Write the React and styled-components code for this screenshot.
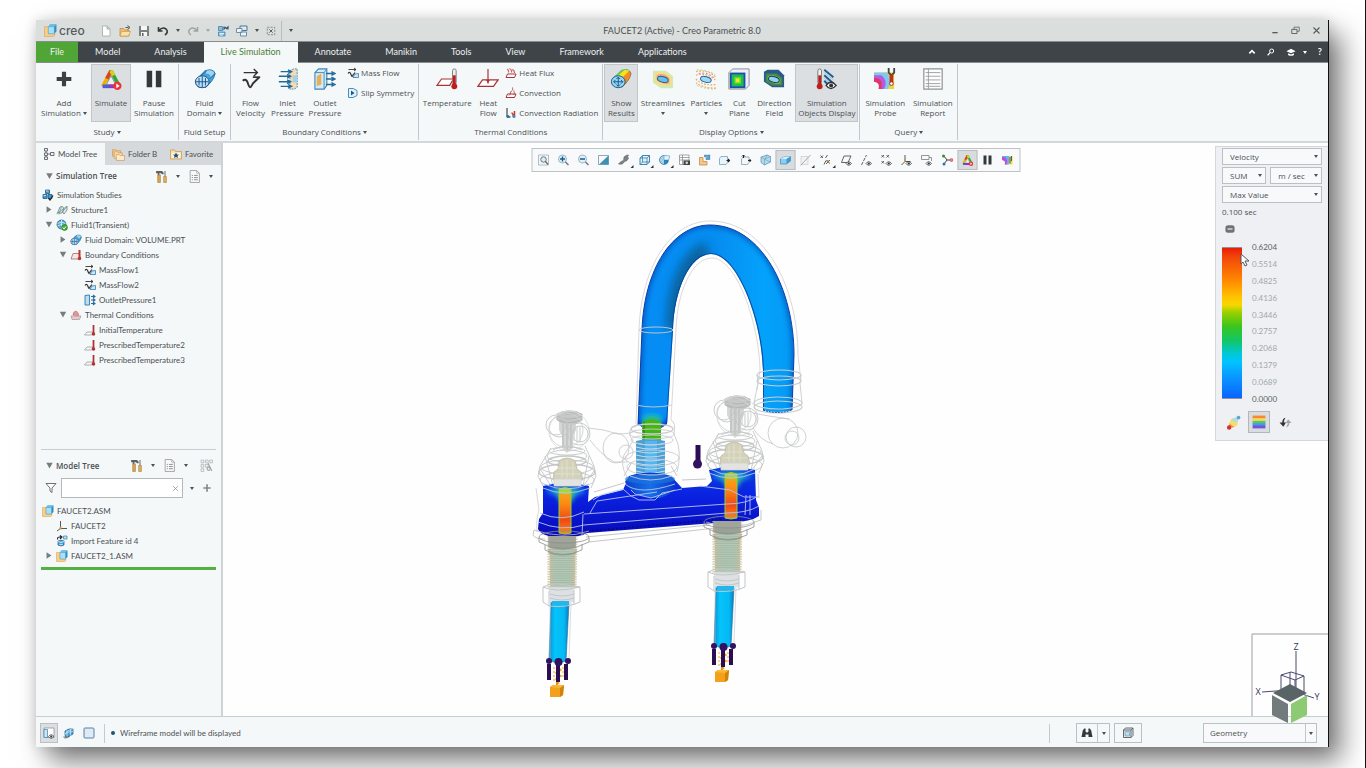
import React from "react";
import styled, { createGlobalStyle, css } from "styled-components";

const GlobalStyle = createGlobalStyle`
  * {
    box-sizing: border-box;
  }
  body {
    margin: 0;
    background: #fff;
    color: #4b5053;
    font-family: "Open Sans", "Noto Sans", sans-serif;
    font-size: 8px;
    line-height: 10px;
  }
  button, input, select {
    margin: 0;
    padding: 0;
    border: 0;
    background: none;
    color: inherit;
    font: inherit;
  }
`;

const narrowFont = css`
  font-family: Lato, "Open Sans", sans-serif;
`;

/* ---------- icons, all drawn on a 24 unit grid ---------- */

const domainShape = (front, side) => (
  <>
    <path d="M2 13 12 3q9-3 11 3-1 7-10 15H5q-4-3-3-8z" fill={side} stroke="#1b6fa8" />
    <path d="M13 3q8-2 9 3l-4 4q0-4-5-4z" fill="#9fd3ee" />
    <path d="m7 9 7-6M17 12l6-6" stroke="#1b6fa8" fill="none" />
    <ellipse cx="9" cy="15" rx="7.5" ry="6.5" fill={front} stroke="#1a4f86" />
    <path d="M9 9v12M2 15h14M5.5 11v8M12.5 11v8" stroke="#1a4f86" fill="none" />
  </>
);

const eye = (
  <>
    <path d="M11 19q5-7 11 0-6 7-11 0z" fill="#fff" stroke="#333" strokeWidth="1.5" />
    <circle cx="16.5" cy="19" r="2.2" fill="#333" />
  </>
);

const thermo = (x) => (
  <>
    <rect x={x} y="1" width="4" height="17" rx="2" fill="#eee" stroke="#777" />
    <path d={`M${x + 2} 8v12`} stroke="#c01c1c" strokeWidth="3" />
    <circle cx={x + 2} cy="20" r="3.2" fill="#c01c1c" />
  </>
);

const plate = <path d="M6 12h13l-4 7H1z" fill="#fff" stroke="#a33" strokeWidth="1.3" />;

const triangle = (
  <>
    <path d="M12 3 3 20" stroke="#e9b400" strokeWidth="4" />
    <path d="M12 3 7.5 11.5" stroke="#e0401c" strokeWidth="4" />
    <path d="m12 3 8 15" stroke="#32a83c" strokeWidth="4" />
    <path d="M12 3l3 5" stroke="#d8cf20" strokeWidth="4" />
    <path d="M3 20h15" stroke="#a42bd0" strokeWidth="4" />
    <path d="M3 20h7" stroke="#2f6ce0" strokeWidth="3" />
    <path d="M12 8.5 7 18h10z" fill="#eee" stroke="#555" strokeWidth=".6" />
    <circle cx="19" cy="19.5" r="4.5" fill="#e33" />
    <path d="m17.8 17 3.7 2.5-3.7 2.5z" fill="#fff" />
  </>
);

const massFlow = (
  <>
    <path d="M3 5h15m-4-3 4 3-4 3" stroke="#333" strokeWidth="1.8" fill="none" />
    <path d="M2 13q4-5 6 2t4 1l4-5" stroke="#333" strokeWidth="2.4" fill="none" />
    <path d="M12 21l4-7 7-1v8z" fill="#cfe6f4" stroke="#2878a8" strokeWidth="1.5" />
  </>
);

const cubeLogo = (
  <>
    <path d="M1 5h7v13h12v3l-3 2H1z" fill="#f8cf8c" stroke="#d99a3d" />
    <path d="M8 5h11v13H8z" fill="#a9e0f6" stroke="#3aa2d0" />
    <path d="m8 5 3-4h12l-4 4zM19 5l4-4v13l-4 4z" fill="#2d8fc4" />
    <path d="m8 5 3-4h12l-4 4z" fill="#6cc0e6" />
  </>
);

const listPage = (
  <>
    <path d="M4 1h12l5 5v17H4z" fill="#fafafa" stroke="#8b8f91" strokeWidth="1.4" />
    <path d="M16 1v5h5" fill="none" stroke="#8b8f91" />
    <path d="M7 10h2M7 14h2M7 18h2M11 10h7M11 14h7M11 18h7" stroke="#73787a" strokeWidth="1.5" />
  </>
);

const shapes = {
  plus: <path d="M12 4v16M4 12h16" stroke="#3c4043" strokeWidth="4.5" />,
  plusSmall: <path d="M12 1v22M1 12h22" stroke="#85898b" strokeWidth="5" />,
  simulate: triangle,
  pause: <path d="M4 3h6v18H4zM14 3h6v18h-6z" fill="#34383a" />,
  domain: domainShape("#b9e0f5", "#4aa3d4"),
  velocity: (
    <>
      <path d="M4 5h15m-4-4 4 4-4 4" stroke="#333" strokeWidth="1.5" fill="none" />
      <path d="M3 14q3-3 5 1 2 6 3 6 1 0 3-4l7-7" stroke="#333" strokeWidth="2.2" fill="none" />
      <path d="M14 10h8" stroke="#333" strokeWidth="1.8" />
    </>
  ),
  inlet: (
    <>
      <path d="m14 3 4-2h4v20l-3 2h-5z" fill="#f3dcb0" stroke="#3c87b6" strokeDasharray="2 1" />
      <path d="M17 8h5v8h-5z" fill="#a8cfe6" />
      <path d="M4 4h11M2 9h12M2 15h12M4 20h11M12 2l4 2-4 2M11 7l4 2-4 2M11 13l4 2-4 2M12 18l4 2-4 2" stroke="#236a9a" fill="none" strokeWidth="1.4" />
    </>
  ),
  outlet: (
    <>
      <path d="m1 5 4-4h9v18l-3 4H1z" fill="#d7ebf6" stroke="#3c87b6" strokeWidth="1.2" />
      <path d="M11 5v18M1 5h10l3-4" fill="none" stroke="#3c87b6" />
      <path d="m3 9 5-3v12l-5 2z" fill="#e3b05e" />
      <path d="M13 6h8M13 12h9M13 18h8M19 4l4 2-4 2M19 10l4 2-4 2M19 16l4 2-4 2" stroke="#236a9a" fill="none" strokeWidth="1.4" />
    </>
  ),
  massFlow,
  slip: (
    <>
      <path d="M3 3q10-2 17 4v10q-7 6-17 4z" fill="#e3f1fa" stroke="#3f92c2" strokeWidth="2" />
      <path d="M8 7v10l7-5z" fill="#23567a" />
    </>
  ),
  temperature: <>{plate}{thermo(18)}</>,
  heatFlow: (
    <>
      <path d="M6 13h17l-5 7H1z" fill="#fff" stroke="#a33" strokeWidth="1.3" />
      <path d="M12 1v16" stroke="#a33" strokeWidth="1.3" />
      <path d="M10 13h4l-2 4z" fill="#a33" />
    </>
  ),
  heatFlux: (
    <>
      <path d="M5 14h17l-3 7H2z" fill="#fff" stroke="#a33" strokeWidth="2" />
      <path d="M4 4q4 2 3 7M9 3q5 2 4 8m1-6q5 1 5 7" stroke="#c66" strokeWidth="2.4" fill="none" />
    </>
  ),
  convection: (
    <>
      <path d="M5 14h17l-3 7H2z" fill="#fff" stroke="#a33" strokeWidth="2" />
      <path d="M8 17c5-4 1-6 5-9s2-4 2-7m2 15c4-4 0-6 1-9" stroke="#a44" strokeWidth="1.8" fill="none" />
    </>
  ),
  radiation: (
    <>
      <path d="M4 2v18h7" stroke="#222" strokeWidth="2" fill="none" />
      <circle cx="6" cy="19" r="3" fill="#2c6fa2" />
      <path d="M13 12q3 0 4 8M19 8v10" stroke="#c33" strokeWidth="3" fill="none" />
      <circle cx="18" cy="19" r="3" fill="#378fbd" />
    </>
  ),
  results: (
    <>
      <path d="M2 13 12 3q9-3 11 3-1 7-10 15z" fill="#f58a1f" stroke="#555" strokeWidth=".6" />
      <path d="M3 11 13 2q7-2 8 1L9 14z" fill="#5ecb5a" />
      <path d="M6 11 16 2l5 1L10 14z" fill="#f8e028" />
      <ellipse cx="9" cy="15" rx="7.5" ry="6.5" fill="#8fd6f3" stroke="#1a4f86" />
      <path d="M9 10v10M4 15h10M7 12l2-2 2 2M7 18l2 2 2-2M6 13l-2 2 2 2M12 13l2 2-2 2" stroke="#1a4f86" fill="none" />
    </>
  ),
  streamlines: (
    <>
      <path d="M1 3h14l8 6v13H10l-9-6z" fill="#cdebb4" />
      <path d="M3 5h12l6 5v9H10l-7-4z" fill="#fbdc85" />
      <path d="M5 8q8-4 14 3v6q-6 2-14-4z" fill="#f7a37c" />
      <ellipse cx="12" cy="12.5" rx="6" ry="3" transform="rotate(15 12 12)" fill="#5fc1ee" stroke="#1f5e93" />
    </>
  ),
  particles: (
    <>
      <path d="M1 4q12-3 22 6M1 8q12-4 22 6M1 12q8 8 22 6M1 16q8 6 22 6" stroke="#f0a060" strokeWidth="1.2" strokeDasharray="2 1.5" fill="none" />
      <path d="M2 2q10 0 20 5M2 19q9 4 20 4" stroke="#9bd070" strokeDasharray="2 2" fill="none" />
      <path d="M4 6q10-2 17 5" stroke="#dd6070" strokeDasharray="2 2" fill="none" />
      <ellipse cx="12" cy="12.5" rx="6" ry="3" transform="rotate(15 12 12)" fill="#9bd8f4" stroke="#1f5e93" />
    </>
  ),
  cut: (
    <>
      <path d="m1 5 4-4h18v18l-4 4H1z" fill="#eef" stroke="#888" />
      <path d="M2 5h17v17H2z" fill="#1b4fa8" />
      <path d="M4 7h13v13H4z" fill="#1fbf4b" />
      <path d="M7 10h7v7H7z" fill="#6fe03a" />
      <path d="M8.5 11.5h4v4h-4z" fill="#f4e61e" />
    </>
  ),
  direction: (
    <>
      <path d="M1 4 5 2h12l6 6v13H10l-9-6z" fill="#2a5a8c" />
      <path d="M3 6h12l6 5v8H10l-7-4z" fill="#3f8a4b" />
      <path d="M5 9q7-4 14 3v5q-6 2-14-4z" fill="#86a94b" />
      <ellipse cx="12" cy="12.5" rx="6" ry="3" transform="rotate(15 12 12)" fill="#8fd3f4" stroke="#183a66" />
    </>
  ),
  objects: (
    <>
      {thermo(2)}
      <path d="m9 2 10 8M9 8l10 9M9 14l5 5" stroke="#1d5f92" strokeWidth="2.2" />
      <path d="m9 5 10 8M9 11l9 8" stroke="#8fc3e4" />
      {eye}
    </>
  ),
  probe: (
    <>
      <path d="M0 5h22v18H5l3-7q-1-4-8-4z" fill="#e8d83a" />
      <path d="M0 5h14q7 8 1 18H6q6-9-6-12z" fill="#7fc9ef" />
      <path d="M0 8h8q8 6 3 15H7q5-9-7-11z" fill="#b45be0" />
      <path d="M0 11q11 0 8 12H5q2-7-5-8z" fill="#e2336b" />
      <path d="M16 0v5l3 3 3-3V0" stroke="#444" strokeWidth="2" fill="none" />
      <path d="M19 7v10" stroke="#c0301c" strokeWidth="4" />
      <circle cx="19" cy="17" r="2" fill="#fff" stroke="#a22" />
    </>
  ),
  report: (
    <>
      <path d="M2 1h20v22H2z" fill="#fdfdfd" stroke="#8e9294" strokeWidth="1.3" />
      <path d="M7 1v22M4 5h16M4 9h16M4 13h16M4 17h16M4 20h16" stroke="#9a9ea0" />
    </>
  ),
  newFile: <path d="M5 2h9l6 6v14H5zM14 2v6h6" fill="#fff" stroke="#9da1a3" strokeWidth="1.5" />,
  open: (
    <>
      <path d="M2 7h7l2 3h9v12H2z" fill="#f3c070" stroke="#b98434" strokeWidth="1.4" />
      <path d="m5 13-3 9h17l4-9z" fill="#fbe0a8" stroke="#b98434" />
      <path d="M13 5h6M17 1l5 4-5 4" stroke="#555" strokeWidth="2" fill="none" />
    </>
  ),
  save: (
    <>
      <path d="M2 2h20v20H2z" fill="#7b8083" />
      <path d="M6 2h12v8H6zM6 14h12v8H6z" fill="#f5f6f6" />
      <path d="M8 16h3v6H8z" fill="#5a5f62" />
    </>
  ),
  undo: <path d="M3 4v8h8M4 11q7-8 14-3 6 6-2 12" stroke="#34383a" strokeWidth="3.2" fill="none" />,
  redo: <path d="M21 4v8h-8M20 11q-7-8-14-3-6 6 2 12" stroke="#9da2a4" strokeWidth="3" fill="none" />,
  regen: (
    <>
      <path d="M3 3h8v8H3zM3 14h13v8H3z" fill="#82bfe2" stroke="#3f7fa8" strokeWidth="1.5" />
      <path d="M14 3v5l4-4m4 5V4l-4 4" stroke="#2b5c7c" strokeWidth="2.4" fill="none" />
      <path d="M5 17h9M5 20h7" stroke="#fff" strokeWidth="1.5" />
    </>
  ),
  windows: (
    <>
      <path d="M8 2h14v9H8z" fill="#dce9f1" stroke="#4d7896" strokeWidth="2" />
      <path d="M1 7h11v8H1zM9 14h12v8H9z" fill="#eef3f6" stroke="#6b8fa8" strokeWidth="2" />
    </>
  ),
  closeWin: (
    <>
      <path d="M3 3h18v18H3z" fill="none" stroke="#777c7e" strokeWidth="2" strokeDasharray="5 3" />
      <path d="m8 8 8 8m0-8-8 8" stroke="#5c6163" strokeWidth="2.4" />
    </>
  ),
  minimize: <path d="M4 17h16" stroke="#565b5d" strokeWidth="4" />,
  restore: (
    <>
      <path d="M8 3h14v11H8z" fill="none" stroke="#565b5d" strokeWidth="2" />
      <path d="M2 9h14v11H2z" fill="#dadedd" stroke="#565b5d" strokeWidth="2.4" />
    </>
  ),
  close: <path d="m4 4 16 16m0-16L4 20" stroke="#565b5d" strokeWidth="3" />,
  clear: <path d="m4 4 16 16m0-16L4 20" stroke="#8a8e90" strokeWidth="2.5" />,
  chevronUp: <path d="m4 16 8-8 8 8" stroke="#fff" strokeWidth="5" fill="none" />,
  search: (
    <>
      <circle cx="14" cy="9" r="6" stroke="#fff" strokeWidth="3" fill="none" />
      <path d="m9 14-7 8" stroke="#fff" strokeWidth="4" />
    </>
  ),
  learn: (
    <>
      <path d="M1 10 12 4l11 6-11 5z" fill="#fff" />
      <path d="M5 15v4q7 4 14 0v-4l-7 3z" fill="#fff" />
    </>
  ),
  treeTab: (
    <>
      <path d="M6 5v15M8 12h7" stroke="#5c6163" strokeWidth="1.8" />
      <path d="M3 1h6v5H3zM3 10h6v5H3zM3 18h6v5H3zM15 9h7v6h-7z" fill="#f2f2f2" stroke="#5c6163" strokeWidth="1.8" />
    </>
  ),
  folders: (
    <>
      <path d="M1 3h6l2 2h7v10H1z" fill="#f4c887" stroke="#c08a46" />
      <path d="M4 7h6l2 2h7v10H4z" fill="#f9dca9" stroke="#c08a46" />
      <path d="M8 12h5l2 2h8v9H8z" fill="#fdebc9" stroke="#c08a46" />
    </>
  ),
  favorite: (
    <>
      <path d="M1 4h8l2 3h12v15H1z" fill="#f8dda6" stroke="#c79a4f" strokeWidth="1.5" />
      <path d="M3 9h18v11H3z" fill="#fdf3dc" />
      <path d="m12 9 2 4 4 .5-3 2.500 1 4-4-2-4 2 1-4-3-2.500L10 13z" fill="#19527c" />
    </>
  ),
  tools: (
    <>
      <path d="M2 2h11l3 3v3h-3l-2-2H8v3H5V6H2z" fill="#5d6163" />
      <path d="M5 9h5v14H5z" fill="#dba650" stroke="#9a7230" />
      <path d="M17 2h3v10h-3z" fill="#9aa0a2" />
      <path d="M16 12h5v11h-5z" fill="#e1b25f" stroke="#9a7230" />
    </>
  ),
  list: listPage,
  studies: (
    <>
      <path d="M7 2h8v7H7zM2 11h8v8H2zM12 11h8v8h-8z" fill="#3f97cf" stroke="#1c567f" strokeWidth="1.5" />
      <path d="M8 3h5v2H8zM3 12h5v2H3z" fill="#b9def3" />
      <path d="m13 18 3 4 6-9" stroke="#222" strokeWidth="2.5" fill="none" />
    </>
  ),
  structure: (
    <>
      <path d="M3 18 8 6q8-3 7 4l-3 8zM13 16 22 4v8l-6 8z" fill="#e7ecee" stroke="#72797c" strokeWidth="1.6" />
      <path d="m1 20 20-15M6 21 11 5" stroke="#4f9a86" strokeWidth="1.4" />
    </>
  ),
  fluid: (
    <>
      <circle cx="11" cy="11" r="9" fill="#5aa9cf" stroke="#246287" strokeWidth="1.5" />
      <path d="M3 9q8-6 16 0M3 14q8-6 16 0M11 2v18" stroke="#e3f3fa" strokeWidth="1.5" fill="none" />
      <circle cx="17" cy="17" r="6" fill="#3faa3a" stroke="#1d6d1a" />
      <path d="m14 17 2 3 4-5" stroke="#fff" strokeWidth="2" fill="none" />
    </>
  ),
  boundary: (
    <>
      <path d="M6 9h12l3 11H2z" fill="#f5e6e6" stroke="#a66" strokeWidth="1.6" />
      <path d="M19 2v16" stroke="#b33" strokeWidth="4" />
      <circle cx="19" cy="19" r="3.5" fill="#b33" />
    </>
  ),
  outletSmall: (
    <>
      <path d="m2 3 9-1v20H2z" fill="#bcdcf0" stroke="#2f7aac" strokeWidth="1.8" />
      <path d="M14 5h8M14 12h8M14 19h8M18 2l4 3-4 3M18 9l4 3-4 3M18 16l4 3-4 3" stroke="#2b6ea0" strokeWidth="2.2" fill="none" />
    </>
  ),
  thermal: (
    <>
      <path d="M2 14h20l-3 7H4z" fill="#e6caca" stroke="#a99" strokeWidth="1.5" />
      <path d="M6 12q0-7 6-8 6 3 5 9z" fill="#e49a9a" stroke="#b55" />
    </>
  ),
  tempSmall: (
    <>
      <path d="M6 16h12l-3 6H1z" fill="#f6f6f6" stroke="#999" strokeWidth="1.5" />
      <path d="M19 2v17" stroke="#b23030" strokeWidth="3.5" />
      <circle cx="19" cy="20" r="3.5" fill="#b23030" />
    </>
  ),
  filter: <path d="M2 3h20l-8 9v9l-4-3v-6z" fill="#fff" stroke="#6c7173" strokeWidth="2" />,
  asm: cubeLogo,
  csys: (
    <>
      <path d="M9 2v15h13M9 17l-7 5" stroke="#54595b" strokeWidth="2" fill="none" />
      <path d="M8 13h3v6H6z" fill="#c99b4a" />
    </>
  ),
  importFeature: (
    <>
      <path d="M3 9q-1-6 7-5m-2-3 4 3-4 4" stroke="#222" strokeWidth="2.2" fill="none" />
      <path d="M15 2h7v6h-7z" fill="#b9dff4" stroke="#3c87b6" strokeWidth="1.5" />
      <path d="M4 12q6-3 12 0v8q-6 4-12 0z" fill="#4ba3d6" stroke="#26648c" strokeWidth="1.5" />
      <path d="M4 13q6 4 12 0M7 19q3 1 6 0" stroke="#fff" strokeWidth="1.5" fill="none" />
    </>
  ),
  hiddenTree: (
    <>
      <path d="M2 2h5v5H2zM10 2h5v5h-5zM2 10h5v5H2zM2 18h5v5H2zM18 2h5v5h-5zM10 10h5v5h-5z" fill="none" stroke="#b1b5b7" strokeWidth="1.5" />
      <path d="m15 8 7 14" stroke="#9ea3a5" strokeWidth="2" />
      <circle cx="16" cy="18" r="3" fill="none" stroke="#9ea3a5" strokeWidth="2" />
    </>
  ),
  refit: (
    <>
      <path d="M2 2h20v20H2z" fill="#f4f6f7" stroke="#a5aaac" strokeWidth="1.5" />
      <circle cx="12" cy="11" r="5.5" fill="#d9edf7" stroke="#5f7888" strokeWidth="2" />
      <path d="m16 15 5 6" stroke="#666" strokeWidth="2.5" />
    </>
  ),
  zoomIn: (
    <>
      <circle cx="10" cy="10" r="8" fill="#dff0f8" stroke="#8fb0c4" strokeWidth="1.8" />
      <path d="M10 5v10M5 10h10" stroke="#1d5c86" strokeWidth="2.8" />
      <path d="m16 16 6 6" stroke="#777" strokeWidth="3" />
    </>
  ),
  zoomOut: (
    <>
      <circle cx="10" cy="10" r="8" fill="#dff0f8" stroke="#8fb0c4" strokeWidth="1.8" />
      <path d="M5 10h10" stroke="#1d5c86" strokeWidth="2.8" />
      <path d="m16 16 6 6" stroke="#777" strokeWidth="3" />
    </>
  ),
  repaint: (
    <>
      <path d="M2 3h20v18H2z" fill="#f8fbfd" stroke="#7a8a94" strokeWidth="1.5" />
      <path d="M22 3v18H3z" fill="#3d8fb5" />
    </>
  ),
  render: <path d="M2 20q4-6 10-7l1-7q5-5 9-4-3 3 0 7-3 6-8 6-3 7-12 5z" fill="#7d8284" stroke="#54595b" />,
  box: (
    <>
      <path d="m3 8 5-5h14v13l-5 5H3z" fill="#e3f2fa" stroke="#2f7aac" strokeWidth="1.8" />
      <path d="M3 8h14v13M17 8l5-5M8 3v13h14M8 16l-5 5" fill="none" stroke="#2f7aac" strokeWidth="1.5" />
    </>
  ),
  section: (
    <>
      <circle cx="11" cy="12" r="9" fill="#a3d3ec" stroke="#39789f" strokeWidth="1.5" />
      <path d="M11 3v9h9l3-8z" fill="#e8f3f9" stroke="#7aa9c4" strokeWidth="1.5" />
      <path d="M11 12v9l8-3v-6z" fill="#2f82b4" />
    </>
  ),
  views: (
    <>
      <path d="M2 2h19v19H2zM2 7h19M2 12h19M8 2v19" fill="#fff" stroke="#85898b" strokeWidth="1.5" />
      <path d="M10 13h13v9H10z" fill="#444" />
      <circle cx="16.5" cy="17.5" r="2.5" fill="#ddd" />
    </>
  ),
  appearance: (
    <>
      <path d="M2 7h7v8h8v7H2z" fill="#f4c887" stroke="#c08a46" strokeWidth="1.5" />
      <path d="M12 2h4v4h-4zM18 2h5v9h-8V8h3z" fill="#5ba8d8" stroke="#2b72a2" />
    </>
  ),
  boxArrow: (
    <>
      <path d="m2 9 3-4h13v12l-3 4H2z" fill="#eaf5fb" stroke="#6a9dbb" strokeWidth="1.5" />
      <path d="M16 13h6m-3-3 3 3-3 3" stroke="#222" strokeWidth="2.2" fill="none" />
    </>
  ),
  boxSpin: (
    <>
      <path d="m4 10 3-4h12v11l-3 4H4z" fill="#f3f7f9" stroke="#8298a4" strokeWidth="1.5" />
      <path d="M8 8V2M5 5l3-3 3 3M17 13h6m-3-3 3 3-3 3" stroke="#222" strokeWidth="2" fill="none" />
    </>
  ),
  shaded: (
    <>
      <path d="m3 6 12-4 7 3v11L10 22 3 17z" fill="#b3d9ec" stroke="#5c95b7" strokeWidth="1.5" />
      <path d="m3 6 7 4v12M10 10l12-5M15 2l-4 9 11 5" stroke="#5c95b7" fill="none" />
    </>
  ),
  slab: (
    <>
      <path d="m2 10 9-5h11v9l-8 6H2z" fill="#8fcdf0" stroke="#3f92c2" strokeWidth="1.5" />
      <path d="m2 10 9-5h11l-8 5z" fill="#d6eefa" />
      <path d="m14 10 8-5v9l-8 6z" fill="#3f9ad0" />
    </>
  ),
  hatch: (
    <>
      <path d="M3 5h14v16H3z" fill="#f2f2f2" stroke="#ccc" strokeWidth="1.5" />
      <path d="M2 23 22 2" stroke="#aaa" strokeWidth="2" />
    </>
  ),
  datum: (
    <>
      <path d="m2 3 5 5m0-5L2 8M12 8l4-6M9 21l4-8M13 20l8-8M14 13l7 6" stroke="#4b4f51" strokeWidth="1.8" fill="none" />
      <path d="M14 12h4v4h-4z" fill="#b88a3c" />
    </>
  ),
  planeEye: (
    <>
      <path d="M7 4h14l-6 13H2z" fill="none" stroke="#555" strokeWidth="1.8" />
      {eye}
    </>
  ),
  axisEye: (
    <>
      <path d="M2 22 12 2" stroke="#555" strokeWidth="1.8" strokeDasharray="7 2" />
      {eye}
    </>
  ),
  pointEye: (
    <>
      <path d="m2 2 5 5m0-5L2 7m10-5 5 5m0-5-5 5M2 14l5 5m0-5-5 5" stroke="#555" strokeWidth="1.8" />
      {eye}
    </>
  ),
  csysEye: (
    <>
      <path d="M9 2v13h11M9 15l-7 7" stroke="#555" strokeWidth="2" fill="none" />
      <path d="M7 11h4v4H7z" fill="#c99b4a" />
      {eye}
    </>
  ),
  noteEye: (
    <>
      <path d="M2 3h15v8H2zM17 7h5v7" fill="none" stroke="#888" strokeWidth="1.8" />
      {eye}
    </>
  ),
  spin: (
    <>
      <path d="M11 12h9M11 12 5 4M11 12l-6 8" stroke="#444" strokeWidth="2" />
      <circle cx="4" cy="4" r="3" fill="#3c8a3c" />
      <circle cx="20" cy="12" r="3" fill="#e88" stroke="#b33" />
      <circle cx="5" cy="20" r="3" fill="#2c6fc0" />
    </>
  ),
  rainbow: (
    <>
      <path d="M1 4h21v17H8V10H1z" fill="#f2d93a" />
      <path d="M1 4h13q4 8 0 17H7q5-8-6-11z" fill="#5fb7ea" />
      <path d="M1 6h6q7 7 3 15H6q4-7-5-9z" fill="#c14ddb" />
      <path d="M17 6v13M20 4v10" stroke="#557" strokeWidth="2" />
    </>
  ),
  minusBadge: (
    <>
      <rect x="1" y="3" width="22" height="18" rx="6" fill="#6e7375" />
      <path d="M6 12h12" stroke="#fff" strokeWidth="2.5" />
    </>
  ),
  range: (
    <>
      <path d="M7 8q4-5 12-4 1 9-2 13-5 3-11 3-2-6 1-12z" fill="#f6dc6f" />
      <path d="M8 8q5-5 11-4 0 5-2 8-5-2-9-4z" fill="#a9dfe9" />
      <path d="M6 13q3 5 8 5l-3 2H6q-2-3 0-7z" fill="#f0934b" />
      <circle cx="5" cy="20" r="3.5" fill="#d8302a" />
      <circle cx="20" cy="4" r="3" fill="#5aa6d8" />
    </>
  ),
  bands: (
    <>
      <path d="M1 1h22v5H1z" fill="#f48a35" />
      <path d="M1 6h22v5H1z" fill="#f8dd4e" />
      <path d="M1 10h22v5H1z" fill="#59c468" />
      <path d="M1 14h22v5H1z" fill="#3f9ce8" />
      <path d="M1 18h22v5H1z" fill="#7453d6" />
    </>
  ),
  flip: (
    <>
      <path d="M12 3Q6 4 6 12H1l7 8 5-8H9q0-5 3-9z" fill="#333" />
      <path d="M13 21q6-1 6-8h4l-6-7-5 7h4q0 5-3 8z" fill="#a3a7a9" />
    </>
  ),
  navPane: (
    <>
      <path d="M2 2h20v19H2z" fill="#fff" stroke="#8a8e90" strokeWidth="1.5" />
      <path d="M2 5h7v16H2z" fill="#cfe5f2" stroke="#3c87b6" strokeWidth="1.5" />
      {eye}
    </>
  ),
  browser: (
    <>
      <path d="M4 8q8-6 16-4v10q-8 6-16 6z" fill="#4ba0d2" stroke="#236089" strokeWidth="1.5" />
      <path d="M1 20Q7 5 23 3M8 6v13M15 4v13M4 13q8-4 16-4" stroke="#cfe7f5" strokeWidth="1.5" fill="none" />
      <path d="M1 20q3 4 12-1" stroke="#444" strokeWidth="1.6" fill="none" />
    </>
  ),
  pane: <rect x="2" y="2" width="20" height="20" rx="2" fill="#dfeaf5" stroke="#5682a8" strokeWidth="2" />,
  find: (
    <>
      <path d="M4 5h5v4l2 2h2l2-2V5h5l3 15h-8v-5H9v5H1z" fill="#33383a" />
      <path d="M6 3h3v3H6zM15 3h3v3h-3z" fill="#33383a" />
    </>
  ),
  select3d: (
    <>
      <path d="m3 6 4-4h15v15l-4 4H3z" fill="#e7edf0" stroke="#555b5e" strokeWidth="1.8" />
      <path d="M3 6h15v15M18 6l4-4" fill="none" stroke="#555b5e" strokeWidth="1.8" />
      <path d="M6 9h9v9H6z" fill="#b8dcef" stroke="#4d87a8" />
    </>
  ),
};

const Svg = styled.svg`
  display: block;
  flex: none;
  width: ${(p) => p.$size}px;
  height: ${(p) => p.$size}px;
`;

const Icon = ({ name, size = 12 }) => (
  <Svg $size={size} viewBox="0 0 24 24" aria-hidden="true">
    {shapes[name]}
  </Svg>
);

const Caret = styled.span`
  display: inline-block;
  flex: none;
  border: 2px solid transparent;
  border-top: 3px solid ${(p) => p.$color || "#4b5053"};
  border-bottom: 0;
  vertical-align: middle;
`;

const Twisty = styled.span`
  flex: none;
  width: 7px;
  height: 8px;
  background: #777c7e;
  clip-path: ${(p) =>
    p.$state === "open"
      ? "polygon(4% 15%, 96% 15%, 50% 88%)"
      : "polygon(15% 8%, 85% 50%, 15% 92%)"};
`;

/* ---------- frame ---------- */

const Page = styled.div`
  display: flex;
  min-height: 100vh;
  padding: 20px 36px 21px;
  border-right: 1px solid #111;
  overflow: hidden;
`;

const Window = styled.main`
  flex: 1;
  min-width: 0;
  display: flex;
  flex-direction: column;
  border-right: 1px solid #111;
  background: #f5f8f9;
  box-shadow: 12px 14px 26px rgba(0, 0, 0, 0.52), 0 0 12px rgba(0, 0, 0, 0.14);
`;

const TitleBar = styled.header`
  display: grid;
  grid-template-columns: 1fr auto 1fr;
  align-items: center;
  height: 21px;
  background: #dadedd;
`;

const QuickAccess = styled.div`
  display: flex;
  align-items: center;
  gap: 7px;
  padding-left: 8px;
`;

const Brand = styled.span`
  display: flex;
  align-items: center;
  gap: 2px;
  margin-right: 8px;
  color: #555b5e;
  font-family: Inter, sans-serif;
  font-size: 12px;
  font-weight: 500;
  line-height: 16px;
`;

const IconButton = styled.button`
  display: flex;
  align-items: center;
  justify-content: center;
  gap: 7px;
`;

const QuickLine = styled.span`
  width: 1px;
  height: 20px;
  margin-left: -2px;
  background: #b9bdbd;
`;

const Title = styled.h1`
  margin: 0;
  ${narrowFont}
  font-size: 9px;
  font-weight: 400;
`;

const WindowButtons = styled.div`
  display: flex;
  justify-content: flex-end;
  gap: 12px;
  padding-right: 7px;
`;

const TabBar = styled.nav`
  display: flex;
  height: 22px;
  border-top: 1px solid #878c8f;
  border-bottom: 1px solid #878c8f;
  background: #3e4448;
  ${narrowFont}
  font-size: 9px;
`;

const Tab = styled.button`
  padding: 0 17px;
  color: #eef0f0;
  ${(p) =>
    p.$file &&
    css`
      padding: 0 14px;
      background: #4fa535;
    `}
  ${(p) =>
    p.$active &&
    css`
      margin-bottom: -1px;
      padding-bottom: 1px;
      background: #f5f8f9;
      color: #4c7f35;
    `}
`;

const TabTools = styled.div`
  display: flex;
  align-items: center;
  gap: 11px;
  margin-left: auto;
  padding-right: 6px;
  color: #fff;
  font-weight: 700;
`;

/* ---------- ribbon ---------- */

const Ribbon = styled.div`
  display: flex;
  height: 80px;
  padding: 1px 0;
  border-bottom: 2px solid #d3d7d9;
`;

const Group = styled.section`
  display: flex;
  flex-direction: column;
  justify-content: space-between;
  padding: 0 1px 3px;
  border-right: 1px solid #c3c7c9;
`;

const GroupItems = styled.div`
  display: flex;
`;

const GroupName = styled.div`
  text-align: center;
`;

const BigButton = styled.button`
  display: flex;
  flex-direction: column;
  align-items: center;
  gap: 8px;
  width: ${(p) => p.$width}px;
  height: 58px;
  padding-top: 3px;
  border: 1px solid ${(p) => (p.$pressed ? "#c2c6c8" : "transparent")};
  background: ${(p) => (p.$pressed ? "#dcdfe1" : "none")};
  white-space: nowrap;
`;

const SmallColumn = styled.div`
  display: flex;
  flex-direction: column;
  gap: 8px;
  padding: 3px 3px 0;
`;

const SmallButton = styled.button`
  display: flex;
  align-items: center;
  gap: 2px;
  height: 12px;
  white-space: nowrap;
`;

const ribbon = [
  {
    name: "Study",
    menu: true,
    big: [
      { icon: "plus", lines: ["Add", "Simulation"], width: 54, menu: true },
      { icon: "simulate", lines: ["Simulate"], width: 40, pressed: true },
      { icon: "pause", lines: ["Pause", "Simulation"], width: 46 },
    ],
  },
  {
    name: "Fluid Setup",
    big: [{ icon: "domain", lines: ["Fluid", "Domain"], width: 49, menu: true }],
  },
  {
    name: "Boundary Conditions",
    menu: true,
    big: [
      { icon: "velocity", lines: ["Flow", "Velocity"], width: 37 },
      { icon: "inlet", lines: ["Inlet", "Pressure"], width: 37 },
      { icon: "outlet", lines: ["Outlet", "Pressure"], width: 38 },
    ],
    small: [
      ["massFlow", "Mass Flow"],
      ["slip", "Slip Symmetry"],
    ],
  },
  {
    name: "Thermal Conditions",
    big: [
      { icon: "temperature", lines: ["Temperature"], width: 54 },
      { icon: "heatFlow", lines: ["Heat", "Flow"], width: 28 },
    ],
    small: [
      ["heatFlux", "Heat Flux"],
      ["convection", "Convection"],
      ["radiation", "Convection Radiation"],
    ],
  },
  {
    name: "Display Options",
    menu: true,
    big: [
      { icon: "results", lines: ["Show", "Results"], width: 34, pressed: true },
      { icon: "streamlines", lines: ["Streamlines", ""], width: 49, menu: true },
      { icon: "particles", lines: ["Particles", ""], width: 38, menu: true },
      { icon: "cut", lines: ["Cut", "Plane"], width: 28 },
      { icon: "direction", lines: ["Direction", "Field"], width: 42 },
      { icon: "objects", lines: ["Simulation", "Objects Display"], width: 63, pressed: true },
    ],
  },
  {
    name: "Query",
    menu: true,
    big: [
      { icon: "probe", lines: ["Simulation", "Probe"], width: 48 },
      { icon: "report", lines: ["Simulation", "Report"], width: 47 },
    ],
  },
];

const RibbonGroup = ({ name, menu, big, small }) => (
  <Group>
    <GroupItems>
      {big.map((b) => (
        <BigButton key={b.icon} $width={b.width} $pressed={b.pressed}>
          <Icon name={b.icon} size={22} />
          <span>
            {b.lines[0]}
            {b.lines.length > 1 && <br />}
            {b.lines[1]} {b.menu && <Caret />}
          </span>
        </BigButton>
      ))}
      {small && (
        <SmallColumn>
          {small.map(([icon, label]) => (
            <SmallButton key={label}>
              <Icon name={icon} />
              {label}
            </SmallButton>
          ))}
        </SmallColumn>
      )}
    </GroupItems>
    <GroupName>
      {name} {menu && <Caret />}
    </GroupName>
  </Group>
);

/* ---------- side panel ---------- */

const Body = styled.div`
  flex: 1;
  display: flex;
  min-height: 0;
`;

const Side = styled.aside`
  display: flex;
  flex-direction: column;
  width: 187px;
  border-right: 2px solid #ced2d5;
  ${narrowFont}
`;

const SideTabs = styled.div`
  display: grid;
  grid-template-columns: 69px 58px 58px;
  height: 22px;
  background: #d5d9db;
`;

const SideTab = styled.button`
  display: flex;
  align-items: center;
  gap: 3px;
  padding-left: 7px;
  background: ${(p) => (p.$active ? "#f5f8f9" : "none")};
  text-align: left;
  white-space: nowrap;
`;

const TreePanel = styled.section`
  margin: 0 5px;
  ${(p) =>
    p.$grow &&
    css`
      flex: 1;
      border-bottom: 1px solid #c9cdcf;
    `}
  ${(p) => p.$rest && css`height: 266px;`}
`;

const TreeHead = styled.div`
  display: flex;
  align-items: center;
  height: ${(p) => (p.$low ? 28 : 22)}px;
  padding: ${(p) => (p.$low ? 3 : 0)}px 3px 0 5px;
`;

const TreeTitle = styled.h2`
  flex: 1;
  margin: 0 0 0 3px;
  font-family: "Open Sans", sans-serif;
  font-size: 8px;
  font-weight: 600;
`;

const HeadTools = styled.div`
  display: flex;
  align-items: center;
  gap: 8px;
`;

const HeadGap = styled.span`
  padding-left: 4px;
`;

const Rows = styled.ul`
  margin: 0;
  padding: 0;
  list-style: none;
`;

const Row = styled.li`
  display: flex;
  align-items: center;
  gap: 3px;
  height: 15px;
  padding-left: ${(p) => p.$depth * 14}px;
  white-space: nowrap;
`;

const SearchRow = styled.form`
  display: flex;
  align-items: center;
  gap: 4px;
  height: 20px;
  margin-bottom: 5px;
  padding: 0 5px 0 4px;
`;

const SearchBox = styled.span`
  flex: 1;
  display: flex;
  align-items: center;
  min-width: 0;
  height: 20px;
  padding-right: 3px;
  border: 1px solid #b4b8ba;
  background: #fff;
`;

const SearchInput = styled.input`
  flex: 1;
  min-width: 0;
  height: 18px;
  padding: 0 4px;
  outline: 0;
`;

const SearchTools = styled.span`
  display: flex;
  align-items: center;
  gap: 9px;
  padding-left: 3px;
`;

const InsertLine = styled.div`
  height: 3px;
  margin-top: 4px;
  background: #53b043;
`;

/* [depth, twisty, icon, text] */
const simulationRows = [
  [0, null, "studies", "Simulation Studies"],
  [0, "closed", "structure", "Structure1"],
  [0, "open", "fluid", "Fluid1(Transient)"],
  [1, "closed", "domain", "Fluid Domain: VOLUME.PRT"],
  [1, "open", "boundary", "Boundary Conditions"],
  [2, "leaf", "massFlow", "MassFlow1"],
  [2, "leaf", "massFlow", "MassFlow2"],
  [2, "leaf", "outletSmall", "OutletPressure1"],
  [1, "open", "thermal", "Thermal Conditions"],
  [2, "leaf", "tempSmall", "InitialTemperature"],
  [2, "leaf", "tempSmall", "PrescribedTemperature2"],
  [2, "leaf", "tempSmall", "PrescribedTemperature3"],
];

const modelRows = [
  [0, null, "asm", "FAUCET2.ASM"],
  [0, "leaf", "csys", "FAUCET2"],
  [0, "leaf", "importFeature", "Import Feature id 4"],
  [0, "closed", "asm", "FAUCET2_1.ASM"],
];

const TwistySlot = styled.span`
  display: flex;
  justify-content: center;
  width: 8px;
  margin-left: 4px;
`;

const RowIcon = styled.span`
  margin-left: ${(p) => (p.$flush ? 1 : 0)}px;
`;

const Tree = ({ rows }) => (
  <Rows>
    {rows.map(([depth, twisty, icon, text]) => (
      <Row key={text} $depth={depth}>
        {twisty && (
          <TwistySlot>{twisty !== "leaf" && <Twisty $state={twisty} />}</TwistySlot>
        )}
        <RowIcon $flush={!twisty}>
          <Icon name={icon} />
        </RowIcon>
        {text}
      </Row>
    ))}
  </Rows>
);

/* ---------- graphics area ---------- */

const Viewport = styled.section`
  position: relative;
  flex: 1;
  min-width: 0;
  background: #fefefe;
`;

const Scene = styled.svg`
  display: block;
  width: 100%;
  height: 100%;
`;

const ViewTools = styled.div`
  position: absolute;
  top: 5px;
  left: 50%;
  display: flex;
  width: 489px;
  height: 24px;
  padding: 1px;
  border: 1px solid #bfc3c6;
  background: #f7f9fa;
  transform: translateX(-50%);
`;

const ViewTool = styled.button`
  flex: 1;
  display: flex;
  align-items: center;
  justify-content: center;
  position: relative;
  border: 1px solid ${(p) => (p.$pressed ? "#b9bdc0" : "transparent")};
  background: ${(p) => (p.$pressed ? "#d9dcde" : "none")};
  ${(p) =>
    p.$more &&
    css`
      &::after {
        content: "";
        position: absolute;
        right: 0;
        bottom: 1px;
        border-left: 3px solid transparent;
        border-bottom: 3px solid #333;
      }
    `}
`;

const viewTools = [
  "refit", "zoomIn", "zoomOut", "repaint", "render", "box", "section", "views",
  "appearance", "boxArrow", "boxSpin", "shaded", "slab", "hatch", "datum",
  "planeEye", "axisEye", "pointEye", "csysEye", "noteEye", "spin", "simulate",
  "pause", "rainbow",
];
const withMenu = ["render", "box", "section", "hatch", "datum"];
const pressedTools = ["slab", "simulate"];

const Legend = styled.aside`
  position: absolute;
  top: 3px;
  right: 0;
  width: 113px;
  padding: 1px 6px 7px;
  border: 1px solid #d3d7da;
  border-right: 0;
  background: #eef0f3;
`;

const SelectRow = styled.div`
  display: flex;
  gap: 4px;
  margin-bottom: 2px;
`;

const SelectWrap = styled.label`
  position: relative;
  display: flex;
  flex: ${(p) => p.$grow || 1};
  min-width: 0;
`;

const Select = styled.select`
  appearance: none;
  width: 100%;
  height: ${(p) => p.$height || 17}px;
  padding: 0 ${(p) => p.$pad || 7}px;
  border: 1px solid #bcc0c3;
  border-radius: 0;
  background: #f8f9fa;
`;

const SelectArrow = styled.span`
  position: absolute;
  top: 1px;
  right: 1px;
  bottom: 1px;
  display: flex;
  align-items: center;
  padding: 0 3px;
  border-left: ${(p) => (p.$line ? "1px solid #c3c7c9" : "0")};
  pointer-events: none;
`;

const DropDown = ({ label, value, grow, pad, height, line }) => (
  <SelectWrap $grow={grow}>
    <Select aria-label={label} $pad={pad} $height={height} defaultValue={value}>
      <option>{value}</option>
    </Select>
    <SelectArrow $line={line}>
      <Caret />
    </SelectArrow>
  </SelectWrap>
);

const Time = styled.div`
  padding: 2px 0 7px;
`;

const Collapse = styled(IconButton)`
  margin-left: 3px;
`;

const Scale = styled.div`
  position: relative;
  display: flex;
  gap: 10px;
  margin: 8px 0 7px;
`;

const ColorBar = styled.div`
  width: 20px;
  margin: 5px 0;
  border: solid #8f9396;
  border-width: 1px 0;
  background: linear-gradient(
    #ea1c08 0%, #f2460a 6%, #ff8a00 22%, #ffc400 33%, #f5d800 38%,
    #9ad000 43%, #3dc51c 52%, #10c66a 62%, #00c8dc 71%, #00c4ff 76%,
    #0a92ff 87%, #0a64ff 100%
  );
`;

const Marks = styled.ol`
  display: flex;
  flex-direction: column;
  justify-content: space-between;
  height: 162px;
  margin: 0;
  padding: 0;
  ${narrowFont}
  list-style: none;
`;

const Mark = styled.li`
  color: ${(p) => (p.$end ? "#5d6265" : "#a3a7aa")};
`;

const Pointer = styled.svg`
  position: absolute;
  top: 11px;
  left: 18px;
  width: 10px;
  height: 14px;
`;

const LegendTools = styled.div`
  display: flex;
  gap: 4px;
`;

const LegendTool = styled.button`
  display: flex;
  align-items: center;
  justify-content: center;
  width: 22px;
  height: 22px;
  border: 1px solid ${(p) => (p.$pressed ? "#b3b7ba" : "transparent")};
  background: ${(p) => (p.$pressed ? "#dadde0" : "none")};
`;

const marks = [
  "0.6204", "0.5514", "0.4825", "0.4136", "0.3446",
  "0.2757", "0.2068", "0.1379", "0.0689", "0.0000",
];

const Orientation = styled.svg`
  position: absolute;
  right: 0;
  bottom: 0;
  width: 76px;
  height: 83px;
  overflow: visible;
  z-index: 1;
`;

/* Handle wireframe: cap, stem and the skirt above the deck. */
const Knob = () => (
  <g fill="none" stroke="#c4c6c7" strokeWidth=".9">
    <path d="M559 421h17v9l-3 6v12l-6 5-5-5v-12l-3-6z" fill="#d5d6d6" stroke="none" />
    <path d="M557 414q10-6 25 0v6l-5 3h-14l-6-3z" fill="#c6c8c8" stroke="#b4b6b6" />
    <path d="M557 416q12 6 25 0M559 420q10 5 21 0M563 424v22m4-22v26m4-26v24" stroke="#b0b2b2" />
    <ellipse cx="570" cy="413" rx="9" ry="2" fill="#babcbc" />
    <circle cx="556" cy="425" r="10" />
    <circle cx="559" cy="427" r="10" />
    <circle cx="566" cy="430" r="17" stroke="#d3d4d4" />
    <circle cx="569" cy="431" r="20" stroke="#dedfdf" />
    <circle cx="579" cy="434" r="11" />
    <circle cx="580" cy="434" r="8" />
    <path d="M574 427v14M577 426v16M580 427v15" />
    <path d="M551 448 540 466l-2 10 5 10M585 446l9 20 2 10-5 12M553 450q14-8 29 0" />
    <ellipse cx="567" cy="451" rx="18" ry="4" />
    <ellipse cx="567" cy="456" rx="20" ry="6" />
    <ellipse cx="567" cy="461" rx="19" ry="5" strokeWidth="1.4" />
    <ellipse cx="567" cy="467" rx="26" ry="7" />
    <ellipse cx="567" cy="472" rx="28" ry="8" strokeWidth="1.4" />
    <ellipse cx="567" cy="480" rx="27" ry="8" />
    <path d="m545 456 8 30M589 456l-6 30M541 470l10 16M594 471l-10 14" />
  </g>
);

const Shank = () => (
  <g>
    <path d="M559 461q8-6 16 0l2 8 4 3 2 8h-30l1-8 4-3z" fill="#d3d1b9" stroke="#bfbda5" strokeWidth=".8" />
    <path d="M558 468h18M555 474h25M562 462v16M567 460v20M573 462v16" stroke="#e6e4d3" strokeWidth=".8" />
    <path d="M554 479h27v7h-27z" fill="#e3e4e2" stroke="#cfd0d0" strokeWidth=".8" />
  </g>
);

const Supply = () => (
  <g>
    <path d="M549 536h27l-1 52h-25z" fill="#c6c6ac" />
    <path d="M553 548h19v40h-19z" fill="#a3ccc0" opacity=".7" filter="url(#soft)" />
    <path d="M549 536v52M576 536l-1 52" stroke="#d8ceab" strokeWidth="3" strokeDasharray="1.5 1" />
    <g stroke="#a5a88f" strokeWidth=".7" opacity=".8">
      {Array.from({ length: 20 }, (_, i) => (
        <path key={i} d={`M550 ${543 + i * 2.2}h25`} />
      ))}
    </g>
    <path d="M548 536h28v11q-14 5-28 0z" fill="#7c8484" opacity=".5" />
    <g fill="none" stroke="#8b9091" strokeWidth=".8">
      <ellipse cx="564" cy="537" rx="25" ry="6" />
      <path d="M539 538v4q24 14 50 0v-4M545 545v5q18 9 37 0v-6M549 549v4q13 4 27 0v-4" />
    </g>
    <path d="m551 602 18 1-3 58q-9 4-17-1z" fill="url(#tube)" stroke="#156d9c" strokeWidth=".6" />
    <path d="M549 587h25v15q-12 4-24 0z" fill="#d8dcde" opacity=".85" />
    <path d="M552 601h17v4h-17z" fill="#22b6ec" />
    <g fill="none" stroke="#c3c6c8">
      <path d="M543 587q9-6 37 0v15q-12 6-31 4l-6-4zM549 591v15M574 590v15M543 587q12 6 37 0M550 594q12 4 24 0M550 598q12 4 24 0" />
    </g>
    <path d="M550 605v55M571 603l-2 56" stroke="#c9c3cf" strokeWidth=".6" fill="none" />
    <path d="m557 667 4 3-5 3 5 3-5 3 3 5" stroke="#f2a51f" strokeWidth="1.5" fill="none" />
    <path d="M554 667v15M563 667v12" stroke="#f2a51f" strokeDasharray="2 2" />
    <path d="M549 664v16M566 664v16M558 664v18" stroke="#2c0d54" strokeWidth="4" />
    <g fill="#33125f">
      <circle cx="549" cy="661" r="3" />
      <circle cx="568" cy="661" r="3" />
      <circle cx="558.5" cy="662" r="4" />
    </g>
    <path d="M557 682v5" stroke="#e69512" strokeWidth="2" />
    <path d="m550 687 3-2h11l-1 10-3 2h-10z" fill="#f3a11a" />
    <path d="m560 688 4-3-1 10-3 2z" fill="#d08209" />
    <path d="m550 687 3-2h11l-4 3z" fill="#fbb63a" />
  </g>
);

const Jet = () => (
  <g>
    <ellipse cx="566" cy="491" rx="19" ry="5" fill="#1ca0e0" opacity=".8" filter="url(#soft)" />
    <path d="M555 490h22l-5 12h-12z" fill="#35c890" opacity=".9" filter="url(#soft)" />
    <path d="M559 489q6-3 12 0v44q-6 2-12 0z" fill="url(#jet)" stroke="#8fcf3c" strokeWidth="1" />
    <path d="M559 490q6-3 12 0v3q-6 2-12 0z" fill="#9fd83a" />
  </g>
);

const Faucet = () => (
  <Scene viewBox="223 143 1105 573" role="img" aria-label="Faucet velocity result">
    <defs>
      <linearGradient id="tube">
        <stop offset="0" stopColor="#0b8fd0" />
        <stop offset=".3" stopColor="#05c4fb" />
        <stop offset=".75" stopColor="#05b9f5" />
        <stop offset="1" stopColor="#0a7cb8" />
      </linearGradient>
      <linearGradient id="jet" x1="0" y1="0" x2="0" y2="1">
        <stop offset="0" stopColor="#f0b41c" />
        <stop offset=".35" stopColor="#fb8a12" />
        <stop offset=".7" stopColor="#ee4a12" />
        <stop offset="1" stopColor="#f98a18" />
      </linearGradient>
      <linearGradient id="spout" gradientUnits="userSpaceOnUse" x1="640" y1="0" x2="794" y2="0">
        <stop offset="0" stopColor="#068df6" />
        <stop offset=".5" stopColor="#068df0" />
        <stop offset=".8" stopColor="#04a2fc" />
        <stop offset="1" stopColor="#0499f4" />
      </linearGradient>
      <linearGradient id="deck" x1="0" y1="0" x2="0" y2="1">
        <stop offset="0" stopColor="#0a3fd8" />
        <stop offset=".4" stopColor="#0a22e2" />
        <stop offset="1" stopColor="#0808b8" />
      </linearGradient>
      <linearGradient id="neck">
        <stop offset="0" stopColor="#0a3fd0" />
        <stop offset=".5" stopColor="#1570e8" />
        <stop offset="1" stopColor="#0a36c8" />
      </linearGradient>
      <filter id="soft" x="-50%" y="-50%" width="200%" height="200%">
        <feGaussianBlur stdDeviation="2.5" />
      </filter>
      <filter id="softer" x="-50%" y="-50%" width="200%" height="200%">
        <feGaussianBlur stdDeviation="5" />
      </filter>
      <clipPath id="pipe">
        <path d="M638 424 642 330C644 270 672 225 710 225c52 0 84 65 84 130l-2 55q-15 4-29 0v-40c-1-50-26-116-52-116-21 0-37 36-38 76l-6 94q-15 12-29 0z" />
      </clipPath>
    </defs>

    <g fill="none" stroke="#d3ced2" strokeWidth=".8">
      <path d="M636 426 639 330C641 268 670 221 710 221c56 0 88 68 88 134l3 26" />
      <path d="M671 420 676 330c1-38 16-72 36-72 24 0 47 64 48 112l-3 20" />
    </g>

    <Knob />
    <g transform="translate(168 -15)"><Knob /></g>
    <g fill="none" stroke="#c3c5c6" strokeWidth=".8">
      <path d="M588 428q16 1 30 6M590 440q10 14 24 22h14M618 434q14 0 18-4" />
      <ellipse cx="616" cy="448" rx="13" ry="15" />
      <circle cx="626" cy="452" r="7" />
      <path d="M753 413q14 3 36 6M753 428q7 12 20 16" />
      <circle cx="783" cy="433" r="15" />
      <circle cx="792" cy="438" r="7" />
      <circle cx="796" cy="437" r="10" />
    </g>

    <g clipPath="url(#pipe)">
      <path d="M620 210h190v230H620z" fill="url(#spout)" />
      <path d="M674 330c0-46 16-76 34-80" stroke="#0a4a6a" strokeWidth="16" fill="none" opacity=".6" filter="url(#softer)" />
      <path d="M638 424 642 330C644 270 672 225 710 225c52 0 84 65 84 130l-2 60" stroke="#0a2f96" strokeWidth="3" fill="none" opacity=".8" filter="url(#soft)" />
      <path d="M763 410v-40c-1-50-26-116-52-116-21 0-37 36-38 76l-6 94" stroke="#0a3f96" strokeWidth="2" fill="none" opacity=".8" />
      <path d="M634 414q6 12 18 12t20-12v18h-38z" fill="#0a2fd0" filter="url(#soft)" />
      <ellipse cx="652" cy="419" rx="10" ry="5" fill="#12b8d8" filter="url(#soft)" />
      <ellipse cx="652" cy="426" rx="9" ry="8" fill="#3fba1a" filter="url(#soft)" />
    </g>
    <path d="M638 425 642 330C644 270 672 225 710 225c52 0 84 65 84 130l-2 55" stroke="#0b3fae" strokeWidth="1" fill="none" />

    <path d="M642 422q9-4 19 0v20h-19z" fill="#45b514" />
    <path d="M644 422v20" stroke="#2f8f2c" strokeWidth="2" />
    <path d="M636 441q14-4 29 0v36h-29z" fill="#4ba0d6" />
    <path d="M645 441h12v36h-12z" fill="#54b5f0" />
    <g stroke="#c9e2ef" strokeWidth=".9" fill="none">
      {[443, 447, 451, 455, 459, 463, 467, 471, 475].map((y) => (
        <path key={y} d={`M636 ${y}q14 4 29 0`} />
      ))}
    </g>

    <path
      d="M543 486q22-6 46 0l-1 16 7-5 28-7 6-14q20-7 42 0l11 12 25-2 5-5-3-11q22-6 46 0l1 30 3 8v8q-10 7-32 6l-140 11q-8 5-27 4-18 0-22-8l1-10 4-6z"
      fill="url(#deck)"
    />
    <path d="M625 482q2-7 27-8 22 1 23 9l-1 6q-3 6-14 9-18 1-30-9z" fill="url(#neck)" />
    <ellipse cx="650" cy="479" rx="25" ry="5" fill="#1c74dc" opacity=".7" />
    <Jet />
    <g transform="translate(166 -15)"><Jet /></g>
    <g fill="none" stroke="#b8c4ef" strokeWidth=".9">
      <path d="M544 484q22 10 45 0M543 488q22 10 47 0M540 513q22 10 44-1M584 514l143-10q20 0 31-8M538 522q24 10 46 3l143-12q20 0 32-7M583 514l-1 22M590 513l7-12 60-9M593 500l8-5 22-6 8 7 8 4h16l7-7 20-4M625 484q14 12 50 0M630 476q20 8 42 0M631 490l4 4 16 4 24-8M710 469q22 12 45 0M709 473q22 10 46 0M700 486l30 4 14 7h15M746 495l-1 20M750 495v20" />
      <path d="M536 488l3 22q-3 8-2 22M758 474l1 24" stroke="#d1d2d6" />
    </g>
    <path d="m588 531 135-12" stroke="#060a80" strokeWidth="1.5" strokeDasharray="2 2" />
    <g fill="none" stroke="#b8b9ba" strokeWidth=".8">
      <path d="m589 542 136-15M586 537l124-12M534 530l-1 5q2 4 12 4M534 530q30 10 55 1M706 522q26 10 55-2v-10M594 492l30-9M682 480l24-1M671 466l6 10M624 476l8-14" />
    </g>

    <g fill="none" stroke="#c9cccf" strokeWidth=".9">
      <ellipse cx="656" cy="330" rx="17" ry="3" />
      <path d="M636 405q17 4 36 0M636 426q-8 2-6 10l3 5-9 14q-4 10 3 22M671 420q5 2 3 14l4 10q3 14-1 28" />
      <ellipse cx="652" cy="429" rx="21" ry="5" strokeWidth="1.3" />
      <ellipse cx="652" cy="434" rx="22" ry="5" />
      <ellipse cx="652" cy="440" rx="21" ry="5" />
      <ellipse cx="652" cy="458" rx="27" ry="8" />
      <ellipse cx="652" cy="467" rx="25" ry="8" />
      <g strokeWidth="1.2">
        <ellipse cx="779" cy="375" rx="22" ry="5" />
        <ellipse cx="779" cy="381" rx="22" ry="5" />
        <ellipse cx="778" cy="403" rx="24" ry="6" />
        <ellipse cx="778" cy="407" rx="24" ry="6" />
      </g>
      <path d="m757 375 1 8-4 20M801 375l-1 8 2 20" />
    </g>
    <path d="M763 410q15 5 29 0" stroke="#0a3fae" strokeDasharray="2 1" fill="none" />

    <Shank />
    <g transform="translate(167 -16)"><Shank /></g>
    <Supply />
    <g transform="translate(165 -15)"><Supply /></g>

    <path d="M698 445v18" stroke="#2c0d54" strokeWidth="5" />
    <circle cx="697.5" cy="464" r="4.5" fill="#33125f" />
  </Scene>
);

const Axes = () => (
  <Orientation viewBox="0 0 76 83" aria-label="Orientation">
    <path d="M0 83V1h76" fill="none" stroke="#9a9ea1" />
    <g stroke="#4b4a70" fill="none">
      <path d="M44 18v39M10 59l28-2 24 8" />
      <path d="m29 42 10-3 13 4-9 4zM29 42v17M52 43v18M38 39v17M43 47v14" />
    </g>
    <g fill="#35335f" fontSize="9" textAnchor="middle">
      <text x="44" y="17">Z</text>
      <text x="6" y="62">X</text>
      <text x="65" y="67">Y</text>
    </g>
    <path d="m38 51 17 9-17 9-17-9z" fill="#596466" />
    <path d="m20 62 16 9v19l-16-8z" fill="#717b7c" />
    <path d="m39 71 16-9v20l-16 8z" fill="#8ccb74" />
  </Orientation>
);

/* ---------- status bar ---------- */

const StatusBar = styled.footer`
  display: flex;
  align-items: center;
  height: 31px;
  padding: 2px 11px 0 4px;
  border-top: 1px solid #c9cdcf;
`;

const StatusButton = styled.button`
  display: flex;
  align-items: center;
  justify-content: center;
  width: ${(p) => (p.$wide ? 34 : p.$boxed ? 28 : 18)}px;
  height: 20px;
  margin-right: ${(p) => (p.$wide || p.$boxed ? 4 : 2)}px;
  border: 1px solid
    ${(p) => (p.$pressed || p.$wide || p.$boxed ? "#bcc0c2" : "transparent")};
  background: ${(p) => (p.$pressed ? "#dcdfe1" : "none")};
`;

const SplitLine = styled.span`
  width: 1px;
  height: 18px;
  margin: 0 4px;
  background: #c3c7c9;
`;

const StatusLine = styled.span`
  width: 1px;
  height: 19px;
  margin: 0 ${(p) => p.$after}px 0 ${(p) => p.$before}px;
  background: #c6cacc;
`;

const Bullet = styled.span`
  width: 4px;
  height: 4px;
  margin-right: 5px;
  border-radius: 50%;
  background: #1b5578;
`;

const Message = styled.p`
  flex: 1;
  margin: 0;
  ${narrowFont}
`;

const FilterSlot = styled.div`
  display: flex;
  width: 114px;
  margin-left: 57px;
`;

const tabs = [
  "Model", "Analysis", "Live Simulation", "Annotate", "Manikin", "Tools",
  "View", "Framework", "Applications",
];

const App = () => (
  <>
    <GlobalStyle />
    <Page>
      <Window>
        <TitleBar>
          <QuickAccess>
            <Brand>
              <Icon name="asm" size={13} />
              creo
            </Brand>
            <IconButton aria-label="New"><Icon name="newFile" /></IconButton>
            <IconButton aria-label="Open"><Icon name="open" /></IconButton>
            <IconButton aria-label="Save"><Icon name="save" /></IconButton>
            <IconButton aria-label="Undo"><Icon name="undo" /><Caret /></IconButton>
            <IconButton aria-label="Redo"><Icon name="redo" /><Caret $color="#a0a5a7" /></IconButton>
            <IconButton aria-label="Regenerate"><Icon name="regen" /></IconButton>
            <IconButton aria-label="Windows"><Icon name="windows" /><Caret /></IconButton>
            <IconButton aria-label="Close model"><Icon name="closeWin" size={10} /></IconButton>
            <QuickLine />
            <IconButton aria-label="Customize"><Caret /></IconButton>
          </QuickAccess>
          <Title>FAUCET2 (Active) - Creo Parametric 8.0</Title>
          <WindowButtons>
            <IconButton aria-label="Minimize"><Icon name="minimize" size={8} /></IconButton>
            <IconButton aria-label="Restore"><Icon name="restore" size={9} /></IconButton>
            <IconButton aria-label="Close"><Icon name="close" size={9} /></IconButton>
          </WindowButtons>
        </TitleBar>

        <TabBar>
          <Tab $file>File</Tab>
          {tabs.map((t) => (
            <Tab key={t} $active={t === "Live Simulation"}>{t}</Tab>
          ))}
          <TabTools>
            <IconButton aria-label="Collapse ribbon"><Icon name="chevronUp" size={8} /></IconButton>
            <IconButton aria-label="Search commands"><Icon name="search" size={8} /></IconButton>
            <IconButton aria-label="Learning"><Icon name="learn" size={10} /><Caret $color="#fff" /></IconButton>
            <IconButton aria-label="Help">?</IconButton>
          </TabTools>
        </TabBar>

        <Ribbon>
          {ribbon.map((g) => (
            <RibbonGroup key={g.name} {...g} />
          ))}
        </Ribbon>

        <Body>
          <Side>
            <SideTabs>
              <SideTab $active><Icon name="treeTab" />Model Tree</SideTab>
              <SideTab><Icon name="folders" size={13} />Folder B</SideTab>
              <SideTab><Icon name="favorite" />Favorite</SideTab>
            </SideTabs>
            <TreePanel $grow>
              <TreeHead>
                <Twisty $state="open" />
                <TreeTitle>Simulation Tree</TreeTitle>
                <HeadTools>
                  <Icon name="tools" size={13} />
                  <Caret />
                  <Icon name="list" size={13} />
                  <Caret />
                </HeadTools>
              </TreeHead>
              <Tree rows={simulationRows} />
            </TreePanel>
            <TreePanel $rest>
              <TreeHead $low>
                <Twisty $state="open" />
                <TreeTitle>Model Tree</TreeTitle>
                <HeadTools>
                  <Icon name="tools" size={13} />
                  <Caret />
                  <Icon name="list" size={13} />
                  <Caret />
                  <HeadGap><Icon name="hiddenTree" size={13} /></HeadGap>
                </HeadTools>
              </TreeHead>
              <SearchRow>
                <Icon name="filter" />
                <SearchBox>
                  <SearchInput aria-label="Filter model tree" />
                  <IconButton type="button" aria-label="Clear"><Icon name="clear" size={7} /></IconButton>
                </SearchBox>
                <SearchTools>
                  <Caret />
                  <Icon name="plusSmall" size={8} />
                </SearchTools>
              </SearchRow>
              <Tree rows={modelRows} />
              <InsertLine />
            </TreePanel>
          </Side>

          <Viewport>
            <Faucet />
            <ViewTools>
              {viewTools.map((t) => (
                <ViewTool
                  key={t}
                  aria-label={t}
                  $pressed={pressedTools.includes(t)}
                  $more={withMenu.includes(t)}
                >
                  <Icon name={t} />
                </ViewTool>
              ))}
            </ViewTools>
            <Legend>
              <SelectRow><DropDown label="Quantity" value="Velocity" /></SelectRow>
              <SelectRow>
                <DropDown label="Component" value="SUM" grow={6} />
                <DropDown label="Unit" value="m / sec" grow={7} />
              </SelectRow>
              <SelectRow><DropDown label="Range" value="Max Value" /></SelectRow>
              <Time>0.100 sec</Time>
              <Collapse aria-label="Collapse legend"><Icon name="minusBadge" size={10} /></Collapse>
              <Scale>
                <ColorBar />
                <Marks>
                  {marks.map((m, i) => (
                    <Mark key={m} $end={i === 0 || i === marks.length - 1}>{m}</Mark>
                  ))}
                </Marks>
                <Pointer viewBox="0 0 10 14">
                  <path d="M1 1v10l2-2 2 4 2-1-2-4h4z" fill="#fff" stroke="#555" />
                </Pointer>
              </Scale>
              <LegendTools>
                <LegendTool aria-label="Color range"><Icon name="range" size={15} /></LegendTool>
                <LegendTool aria-label="Color bands" $pressed><Icon name="bands" size={14} /></LegendTool>
                <LegendTool aria-label="Flip colors"><Icon name="flip" size={13} /></LegendTool>
              </LegendTools>
            </Legend>
            <Axes />
          </Viewport>
        </Body>

        <StatusBar>
          <StatusButton aria-label="Navigator" $pressed><Icon name="navPane" /></StatusButton>
          <StatusButton aria-label="Browser"><Icon name="browser" /></StatusButton>
          <StatusButton aria-label="Full screen"><Icon name="pane" /></StatusButton>
          <StatusLine $before={4} $after={6} />
          <Bullet />
          <Message>Wireframe model will be displayed</Message>
          <StatusLine $before={0} $after={26} />
          <StatusButton aria-label="Find" $wide>
            <Icon name="find" />
            <SplitLine />
            <Caret />
          </StatusButton>
          <StatusButton aria-label="Select in 3D" $boxed><Icon name="select3d" /></StatusButton>
          <FilterSlot>
            <DropDown label="Selection filter" value="Geometry" height={20} pad={6} line />
          </FilterSlot>
        </StatusBar>
      </Window>
    </Page>
  </>
);

export default App;
